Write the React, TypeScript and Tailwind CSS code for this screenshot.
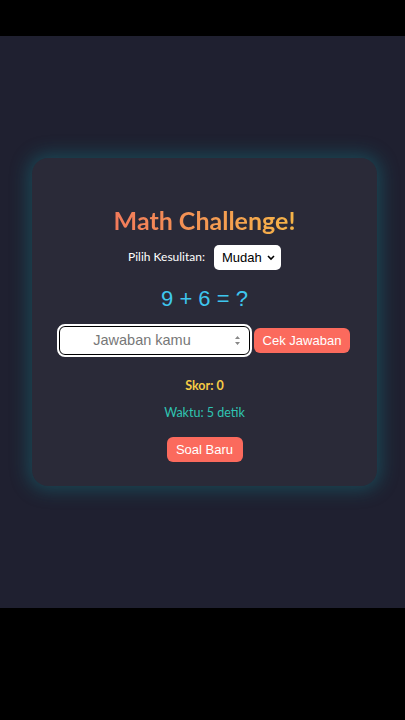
import React from "react";

export default function App() {
  return (
    <div className="flex h-[720px] flex-col bg-black font-['Liberation_Sans',sans-serif]">
      <div className="h-[36px] bg-black" />
      <div className="flex h-[572px] items-center justify-center bg-[#1f2030] pl-[4px]">
        <div className="flex w-[345px] flex-col items-center rounded-2xl bg-[#2a2a38] pt-[47px] pb-[24px] shadow-[0_0_18px_4px_rgba(20,120,130,0.45)]">
          <h1 className="bg-gradient-to-r from-[#f27a5a] to-[#f5b447] bg-clip-text font-['Lato',sans-serif] text-[25px] font-bold leading-[30px] text-transparent">
            Math Challenge!
          </h1>
          <div className="mt-[10px] flex items-center gap-[9px]">
            <span className="font-['Lato',sans-serif] text-[12px] text-white">Pilih Kesulitan:</span>
            <div className="relative">
              <select className="h-[25px] w-[67px] appearance-none rounded-[5px] bg-white pl-[8px] text-[13px] text-black outline-none">
                <option>Mudah</option>
                <option>Sedang</option>
                <option>Sulit</option>
              </select>
              <svg className="pointer-events-none absolute right-[6px] top-[10px]" width="8" height="6" viewBox="0 0 8 6">
                <path d="M1 1l3 3 3-3" fill="none" stroke="#000" strokeWidth="1.6" />
              </svg>
            </div>
          </div>
          <div className="mt-[15px] text-[22px] leading-[28px] text-[#3ec6ee]">9 + 6 = ?</div>
          <div className="mt-[13px] flex items-center gap-[4px]">
            <div className="relative">
              <input
                type="number"
                placeholder="Jawaban kamu"
                className="h-[29px] w-[191px] rounded-[6px] border border-black bg-white pl-2 pr-[18px] text-center text-[14.5px] text-black outline outline-2 outline-white placeholder:text-[#777]"
              />
              <svg className="pointer-events-none absolute right-[9px] top-[9px]" width="7" height="11" viewBox="0 0 7 11">
                <path d="M1 4l2.5-3 2.5 3z M1 7l2.5 3 2.5-3z" fill="#888" />
              </svg>
            </div>
            <button className="h-[25px] w-[96px] rounded-[6px] bg-[#fb6a5d] text-[13px] text-white">
              Cek Jawaban
            </button>
          </div>
          <div className="mt-[22px] font-['Lato',sans-serif] text-[12.5px] font-bold text-[#f7cc45]">Skor: 0</div>
          <div className="mt-[8px] font-['Lato',sans-serif] text-[12.5px] text-[#2fc4b2]">Waktu: 5 detik</div>
          <button className="mt-[15px] h-[25px] w-[76px] rounded-[6px] bg-[#fb6a5d] text-[13px] text-white">
            Soal Baru
          </button>
        </div>
      </div>
      <div className="flex-1 bg-black" />
    </div>
  );
}
